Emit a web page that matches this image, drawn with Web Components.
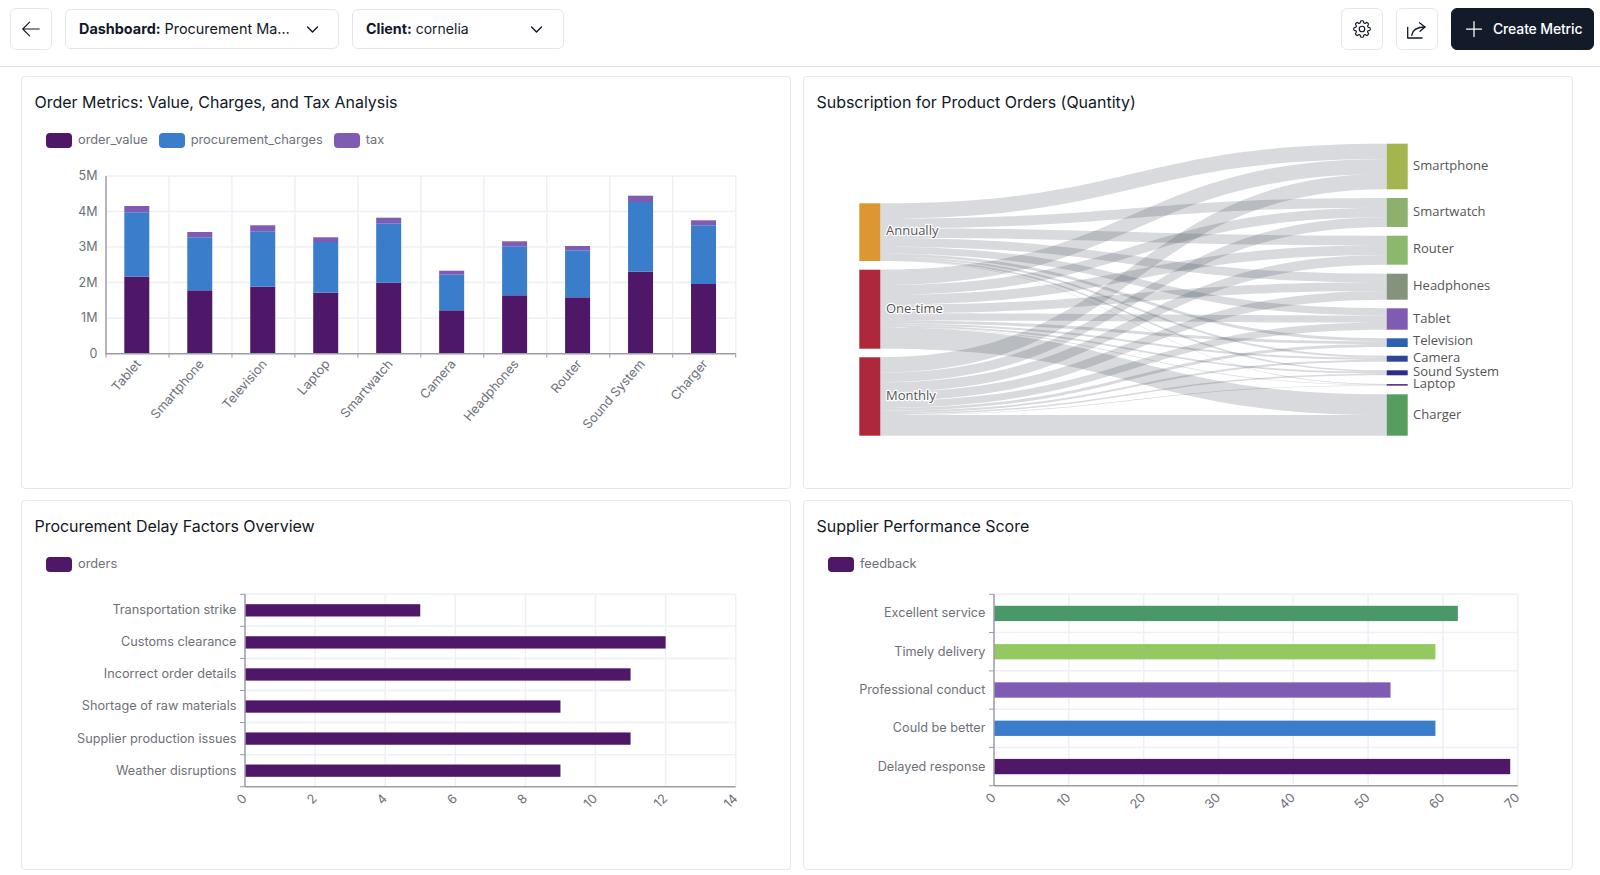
<!DOCTYPE html>
<html lang="en">
<head>
<meta charset="utf-8">
<title>Procurement dashboard</title>
<style>
  html, body { margin: 0; height: 100%; background: #fff; overflow: hidden; }
  body { font-family: Inter, "Liberation Sans", sans-serif; }
</style>
</head>
<body>
<dash-page>
  <dash-toolbar slot="toolbar"></dash-toolbar>
  <dash-card slot="cards" heading="Order Metrics: Value, Charges, and Tax Analysis"><stacked-chart></stacked-chart></dash-card>
  <dash-card slot="cards" heading="Subscription for Product Orders (Quantity)"><sankey-chart></sankey-chart></dash-card>
  <dash-card slot="cards" heading="Procurement Delay Factors Overview"><delay-chart></delay-chart></dash-card>
  <dash-card slot="cards" heading="Supplier Performance Score"><score-chart></score-chart></dash-card>
</dash-page>

<script>
(function () {
  const PURPLE = '#4f1767', BLUE = '#3a7dca', VIOLET = '#7f5bb4', GREEN = '#4a9868', LIME = '#94c962';
  const GRID = '#eef0f8', AXIS = '#9b9ba6', LABEL = '#6e7079';

  const ICONS = {
    back: '<path d="M10.5 19.5 3 12m0 0 7.5-7.5M3 12h18"/>',
    chevron: '<path d="m5 8.5 7 7 7-7"/>',
    plus: '<path d="M12 3v18M3 12h18"/>',
    gear: '<path d="M10.34 3.94c.09-.54.56-.94 1.11-.94h1.09c.55 0 1.02.4 1.11.94l.15.89c.06.42.37.76.77.93.4.17.86.15 1.22-.11l.74-.53c.45-.32 1.06-.27 1.45.12l.77.77c.39.39.44 1 .12 1.45l-.53.74c-.26.36-.28.82-.11 1.22.17.4.51.71.93.77l.89.15c.54.09.94.56.94 1.11v1.09c0 .55-.4 1.02-.94 1.11l-.89.15c-.42.06-.76.37-.93.77-.17.4-.15.86.11 1.22l.53.74c.32.45.27 1.06-.12 1.45l-.77.77c-.39.39-1 .44-1.45.12l-.74-.53c-.36-.26-.82-.28-1.22-.11-.4.17-.71.51-.77.93l-.15.89c-.09.54-.56.94-1.11.94h-1.09c-.55 0-1.02-.4-1.11-.94l-.15-.89c-.06-.42-.37-.76-.77-.93-.4-.17-.86-.15-1.22.11l-.74.53c-.45.32-1.06.27-1.45-.12l-.77-.77c-.39-.39-.44-1-.12-1.45l.53-.74c.26-.36.28-.82.11-1.22-.17-.4-.51-.71-.93-.77l-.89-.15C3.4 13.56 3 13.09 3 12.54v-1.09c0-.55.4-1.02.94-1.11l.89-.15c.42-.06.76-.37.93-.77.17-.4.15-.86-.11-1.22l-.53-.74c-.32-.45-.27-1.06.12-1.45l.77-.77c.39-.39 1-.44 1.45-.12l.74.53c.36.26.82.28 1.22.11.4-.17.71-.51.77-.93l.14-.89Z"/><circle cx="12" cy="12" r="3"/>',
    share: '<path d="M2.7 10.3V21H17"/><path d="M6.7 18.3C7.5 13 12 10 20 10"/><path d="M14.5 5.8 20 10l-5 4.2"/>'
  };
  const icon = (name, size, sw) => `<svg width="${size}" height="${size}" viewBox="0 0 24 24" fill="none" stroke="currentColor" stroke-width="${sw || 1.3}" stroke-linecap="round" stroke-linejoin="round">${ICONS[name]}</svg>`;

  class DashPage extends HTMLElement {
    connectedCallback() {
      this.attachShadow({ mode: 'open' }).innerHTML = `
        <style>
          :host { display: block; }
          main {
            display: grid;
            grid-template-columns: 770px 770px;
            grid-template-rows: 413px 370px;
            gap: 11px 12px;
            padding: 9px 0 0 21px;
          }
        </style>
        <slot name="toolbar"></slot>
        <main><slot name="cards"></slot></main>`;
    }
  }

  class DashToolbar extends HTMLElement {
    connectedCallback() {
      this.attachShadow({ mode: 'open' }).innerHTML = `
        <style>
          :host {
            display: flex; align-items: center; box-sizing: border-box;
            height: 67px; padding: 0 6px 8px 10px;
            border-bottom: 1px solid #dfdfe6;
            color: #111827; font: 14px/20px Inter, sans-serif;
          }
          button {
            display: flex; align-items: center; justify-content: center; box-sizing: border-box;
            height: 42px; padding: 0; background: #fff; color: inherit;
            border: 1px solid #e5e7eb; border-radius: 6px; font: inherit;
          }
          .square { width: 42px; }
          .select {
            width: 274px; height: 40px; margin-left: 13px;
            justify-content: space-between; padding: 0 17px 0 13px;
            font-size: 14.4px;
          }
          .select.client { width: 212px; padding-right: 18px; font-size: 14px; }
          .select span { white-space: nowrap; }
          b { font-weight: 700; }
          .client b { font-size: 14.3px; }
          .spacer { flex: 1; }
          .share { margin-left: 13px; }
          .create {
            width: 143px; margin-left: 13px; gap: 9.5px; justify-content: flex-start; padding-left: 11.5px;
            background: #131a2a; border-color: #131a2a; color: #fff; font-weight: 500; letter-spacing: -.15px;
          }
        </style>
        <button class="square">${icon('back', 22, 1.2)}</button>
        <button class="select"><span><b>Dashboard:</b> Procurement Ma…</span>${icon('chevron', 17, 2)}</button>
        <button class="select client"><span><b>Client:</b> cornelia</span>${icon('chevron', 17, 2)}</button>
        <div class="spacer"></div>
        <button class="square">${icon('gear', 22)}</button>
        <button class="square share">${icon('share', 24)}</button>
        <button class="create">${icon('plus', 20, 1.5)}<span>Create Metric</span></button>`;
    }
  }

  class DashCard extends HTMLElement {
    connectedCallback() {
      this.attachShadow({ mode: 'open' }).innerHTML = `
        <style>
          :host {
            display: flex; flex-direction: column; box-sizing: border-box; min-height: 0;
            padding: 14px 13px; background: #fff;
            border: 1px solid #e5e7eb; border-radius: 4px;
          }
          h2 { margin: 0 0 0 -.5px; font: 400 16px/22px Inter, sans-serif; letter-spacing: -.03px; color: #111827; }
        </style>
        <h2>${this.getAttribute('heading')}</h2>
        <slot></slot>`;
    }
  }

  // shared look of the three bar charts: legend row on top, svg below in page coordinates
  const chartStyle = `
    :host { display: block; }
    .legend {
      display: flex; align-items: center; height: 15px; margin: 20px 0 10px 11px;
      font: 12.8px/14px Inter, sans-serif; color: ${LABEL};
    }
    .legend i { width: 26px; height: 15px; border-radius: 4px; margin-right: 6px; }
    .legend span { margin-right: 11px; position: relative; top: -.5px; }
    svg { display: block; }
    text { font: 12.7px Inter, sans-serif; fill: ${LABEL}; }`;

  const legend = items => `<div class="legend">${items.map(([name, color]) =>
    `<i style="background:${color}"></i><span>${name}</span>`).join('')}</div>`;

  const line = (x1, y1, x2, y2, color, w) =>
    `<line x1="${x1}" y1="${y1}" x2="${x2}" y2="${y2}" stroke="${color}" stroke-width="${w}"/>`;
  const rect = (x, y, w, h, color) =>
    `<rect x="${x}" y="${y}" width="${w}" height="${h}" fill="${color}"/>`;
  const slanted = (x, y, t, deg = 45) =>
    `<text transform="translate(${x} ${y}) rotate(-${deg})" text-anchor="end" dy=".35em">${t}</text>`;

  class StackedChart extends HTMLElement {
    connectedCallback() {
      const x0 = 106, x1 = 735.7, top = 176, base = 353.7, band = (x1 - x0) / 10;
      // [label, top of tax, top of charges, top of value] as page y
      const rows = [
        ['Tablet', 206, 212.3, 276.7], ['Smartphone', 232, 237.3, 290.3], ['Television', 225.3, 231.3, 286.7],
        ['Laptop', 237.3, 242, 292.7], ['Smartwatch', 217.7, 223.3, 282.7], ['Camera', 270.7, 274.7, 310.3],
        ['Headphones', 241.3, 246.3, 295.3], ['Router', 246, 250.3, 297.3], ['Sound System', 195.7, 202, 271.7],
        ['Charger', 220.3, 225.3, 284]
      ];
      let s = '';
      ['5M', '4M', '3M', '2M', '1M', '0'].forEach((t, i) => {
        const y = top + i * (base - top) / 5;
        if (i < 5) s += line(x0, y, x1, y, GRID, 1.5);
        s += `<text x="97.5" y="${y - .5}" text-anchor="end" dy=".36em" style="font-size:12.5px">${t}</text>`;
      });
      for (let i = 1; i <= 10; i++) s += line(x0 + i * band, top, x0 + i * band, base, GRID, 1.5);
      rows.forEach(([name, a, b, c], i) => {
        const x = x0 + i * band + 18.3;
        s += rect(x, c, 25, base - c, PURPLE) + rect(x, b, 25, c - b, BLUE) + rect(x, a, 25, b - a, VIOLET);
        s += slanted(x + 14, 361.5, name, 49);
      });
      s += line(x0, top, x0, base, AXIS, 1.5) + line(x0 - 1, base, x1, base, AXIS, 1.5);
      for (let i = 0; i <= 10; i++) s += line(x0 + i * band, base, x0 + i * band, base + 4, AXIS, 1);
      this.attachShadow({ mode: 'open' }).innerHTML = `<style>${chartStyle}</style>
        ${legend([['order_value', PURPLE], ['procurement_charges', BLUE], ['tax', VIOLET]])}
        <svg width="742" height="316" viewBox="35 158 742 316">${s}</svg>`;
    }
  }

  function barChart(o) {
    const { x0, x1, top, base, max, step, rows, labelX, barH } = o;
    const band = (base - top) / rows.length, unit = (x1 - x0) / max;
    let s = '';
    for (let v = step; v <= max; v += step) s += line(x0 + v * unit, top, x0 + v * unit, base, GRID, 1.5);
    for (let i = 0; i < rows.length; i++) s += line(x0, top + i * band, x1, top + i * band, GRID, 1.5);
    rows.forEach(([name, val, color], i) => {
      const cy = top + (i + .5) * band;
      s += rect(x0, cy - barH / 2, val * unit, barH, color);
      s += `<text x="${labelX}" y="${cy - .5}" text-anchor="end" dy=".35em">${name}</text>`;
    });
    s += line(x0, top, x0, base, AXIS, 1.5) + line(x0, base, x1, base, AXIS, 1.5);
    for (let i = 0; i <= rows.length; i++) s += line(x0 - 5, top + i * band, x0, top + i * band, AXIS, 1);
    for (let v = 0; v <= max; v += step) s += slanted(x0 + v * unit - .5, base + 9.5, v);
    return s;
  }

  class DelayChart extends HTMLElement {
    connectedCallback() {
      const rows = [['Transportation strike', 5], ['Customs clearance', 12], ['Incorrect order details', 11],
        ['Shortage of raw materials', 9], ['Supplier production issues', 11], ['Weather disruptions', 9]]
        .map(r => [r[0], r[1], PURPLE]);
      const s = barChart({ x0: 245, x1: 735.7, top: 594.3, base: 786.7, max: 14, step: 2, rows, labelX: 236.5, barH: 12.3 });
      this.attachShadow({ mode: 'open' }).innerHTML = `<style>${chartStyle}</style>
        ${legend([['orders', PURPLE]])}
        <svg width="742" height="272" viewBox="35 582 742 272">${s}</svg>`;
    }
  }

  class ScoreChart extends HTMLElement {
    connectedCallback() {
      const rows = [['Excellent service', 62, GREEN], ['Timely delivery', 59, LIME], ['Professional conduct', 53, VIOLET],
        ['Could be better', 59, BLUE], ['Delayed response', 69, PURPLE]];
      const s = barChart({ x0: 994, x1: 1517.7, top: 594.3, base: 785.7, max: 70, step: 10, rows, labelX: 985.5, barH: 15.3 });
      this.attachShadow({ mode: 'open' }).innerHTML = `<style>${chartStyle}</style>
        ${legend([['feedback', PURPLE]])}
        <svg width="742" height="272" viewBox="817 582 742 272">${s}</svg>`;
    }
  }

  class SankeyChart extends HTMLElement {
    connectedCallback() {
      const lx = 859.3, rx = 1386.7, nw = 21;
      const sources = [
        ['Annually', 203.3, 261, '#dc9632', 230.7],
        ['One-time', 269.7, 348.7, '#ad2839', 308],
        ['Monthly', 357.3, 435.7, '#ad2839', 395]
      ];
      // [name, top, bottom, colour, label y]
      const targets = [
        ['Smartphone', 143.7, 189.3, '#a4b44e', 165.3],
        ['Smartwatch', 198, 227, '#8db06d', 211],
        ['Router', 235.7, 264.7, '#8cb86e', 248.7],
        ['Headphones', 273.7, 299.7, '#85927c', 285],
        ['Tablet', 308.3, 329.7, '#7f5bb4', 318],
        ['Television', 338.3, 347, '#2f5fb0', 340.6],
        ['Camera', 355.7, 361.7, '#2f4596', 357],
        ['Sound System', 370.3, 375.3, '#2e2a8e', 371.7],
        ['Laptop', 384, 385.7, '#6a2f9a', 383.4],
        ['Charger', 394.3, 435.7, '#579d60', 414]
      ];
      const xa = lx + nw, xb = rx, xm = (xa + xb) / 2;
      let links = '';
      sources.forEach((src, si) => {
        const usable = targets.filter(t => si > 0 || t[0] !== 'Charger');
        // Annually feeds 9 targets, the other two feed all 10; Charger is split in two
        const weight = t => (t[2] - t[1]) / (t[0] === 'Charger' ? 2 : 3);
        const total = usable.reduce((n, t) => n + weight(t), 0);
        const k = (src[2] - src[1]) / total;
        let y = src[1];
        usable.forEach(t => {
          const w = weight(t), order = t[0] === 'Charger' ? si - 1 : si;
          const ty = t[1] + order * w, a = w * k;
          links += `<path d="M${xa} ${y}C${xm} ${y} ${xm} ${ty} ${xb} ${ty}L${xb} ${ty + w}C${xm} ${ty + w} ${xm} ${y + a} ${xa} ${y + a}Z"/>`;
          y += a;
        });
      });
      const label = (x, y, t) => `<text x="${x}" y="${y}" dy=".35em">${t}</text>`;
      let nodes = '';
      sources.forEach(n => { nodes += rect(lx, n[1], nw, n[2] - n[1], n[3]); });
      targets.forEach(n => { nodes += rect(rx, n[1], nw, n[2] - n[1], n[3]); });
      let labels = '';
      sources.forEach(n => { labels += label(886, n[4], n[0]); });
      targets.forEach(n => { labels += label(1413, n[4], n[0]); });
      this.attachShadow({ mode: 'open' }).innerHTML = `
        <style>
          :host { display: block; }
          svg { display: block; margin-top: 20px; }
          .links { fill: rgb(60,72,85); fill-opacity: .2; }
          text {
            font: 13px "Open Sans", sans-serif; fill: #555;
            stroke: #fff; stroke-width: 2.5px; paint-order: stroke; stroke-linejoin: round;
          }
        </style>
        <svg width="742" height="341" viewBox="817 133 742 341">
          <g class="links">${links}</g>${nodes}${labels}
        </svg>`;
    }
  }

  customElements.define('dash-page', DashPage);
  customElements.define('dash-toolbar', DashToolbar);
  customElements.define('dash-card', DashCard);
  customElements.define('stacked-chart', StackedChart);
  customElements.define('delay-chart', DelayChart);
  customElements.define('score-chart', ScoreChart);
  customElements.define('sankey-chart', SankeyChart);
})();
</script>
</body>
</html>
